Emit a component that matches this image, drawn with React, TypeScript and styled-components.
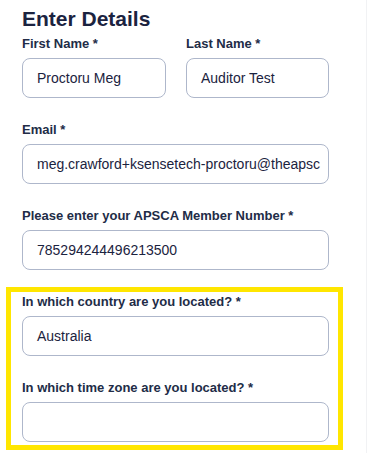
import React from "react";
import styled, { createGlobalStyle } from "styled-components";

const Global = createGlobalStyle`
  html, body { margin: 0; padding: 0; background: #ffffff; }
  body { font-family: "Liberation Sans", Arial, sans-serif; }
  * { box-sizing: border-box; }
`;

const Page = styled.div`
  width: 367px;
  height: 453px;
  border-right: 1px solid #f1f2f4;
  padding: 6px 0 0 6px;
  overflow: hidden;
`;

const Column = styled.div`
  width: 337px;
  display: flex;
  flex-direction: column;
`;

const Heading = styled.h1`
  margin: 0 0 4px 16px;
  font-size: 21px;
  line-height: 26px;
  font-weight: 700;
  color: #1b2340;
`;

const Section = styled.div`
  padding-left: 16px;
  display: flex;
  flex-direction: column;
  gap: 24px;
  width: 323px;
`;

const Row = styled.div`
  display: grid;
  grid-template-columns: 144px 143px;
  column-gap: 20px;
`;

const Field = styled.div`
  display: flex;
  flex-direction: column;
  gap: 6px;
`;

const Label = styled.label`
  font-size: 13px;
  line-height: 16px;
  font-weight: 700;
  color: #222c47;
  white-space: nowrap;
`;

const Input = styled.div`
  height: 40px;
  border: 1px solid #aeb7cb;
  border-radius: 8px;
  padding: 0 14px;
  display: flex;
  align-items: center;
  font-size: 14px;
  color: #1b2340;
  white-space: nowrap;
  overflow: hidden;
  background: #ffffff;
`;

const Highlight = styled.div`
  margin-top: 17px;
  border: 5px solid #ffe600;
  padding: 2px 9px 3px 11px;
  display: flex;
  flex-direction: column;
  gap: 24px;
`;

const FormField = ({ label, value }: { label: string; value?: string }) => (
  <Field>
    <Label>{label}</Label>
    <Input>{value ?? ""}</Input>
  </Field>
);

export default function App() {
  return (
    <>
      <Global />
      <Page>
        <Column>
          <Heading>Enter Details</Heading>
          <Section>
            <Row>
              <FormField label="First Name *" value="Proctoru Meg" />
              <FormField label="Last Name *" value="Auditor Test" />
            </Row>
            <FormField label="Email *" value="meg.crawford+ksensetech-proctoru@theapsc" />
            <FormField label="Please enter your APSCA Member Number *" value="785294244496213500" />
          </Section>
          <Highlight>
            <FormField label="In which country are you located? *" value="Australia" />
            <FormField label="In which time zone are you located? *" />
          </Highlight>
        </Column>
      </Page>
    </>
  );
}
